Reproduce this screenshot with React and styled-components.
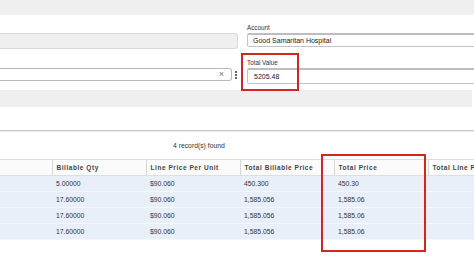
import React from "react";
import styled, { createGlobalStyle } from "styled-components";

const GlobalStyle = createGlobalStyle`
  body {
    margin: 0;
    background: #fff;
    font-family: "Liberation Sans", Arial, sans-serif;
    color: #333;
    overflow: hidden;
  }
`;

const columns = ["", "Billable Qty", "Line Price Per Unit", "Total Billable Price", "Total Price", "Total Line Price"];

const rows = [
  ["", "5.00000", "$90.060", "450.300", "450.30", ""],
  ["", "17.60000", "$90.060", "1,585.056", "1,585.06", ""],
  ["", "17.60000", "$90.060", "1,585.056", "1,585.06", ""],
  ["", "17.60000", "$90.060", "1,585.056", "1,585.06", ""],
];

export default function App() {
  return (
    <Page>
      <GlobalStyle />
      <Band $height={15} />

      <FormRow $height={38}>
        <LeftCol>
          <DisabledBox />
        </LeftCol>
        <RightCol $top={8}>
          <Label>Account</Label>
          <Field $height={14}>Good Samaritan Hospital</Field>
        </RightCol>
      </FormRow>

      <FormRow $height={37}>
        <LeftCol>
          <LookupBox>
            <ClearIcon>×</ClearIcon>
          </LookupBox>
          <Kebab>
            <span />
            <span />
            <span />
          </Kebab>
        </LeftCol>
        <RightCol $top={5}>
          <Label>Total Value</Label>
          <Field $height={16} $indent={6}>5205.48</Field>
          <Highlight style={{ left: 0, top: 0, width: 58, height: 38 }} />
        </RightCol>
      </FormRow>

      <Band $height={17} $trim={2} />

      <Divider />
      <Records>4 record(s) found</Records>

      <TableWrap>
        <Grid>
          <colgroup>
            <col style={{ width: 52 }} />
            {columns.slice(1).map((c) => (
              <col key={c} style={{ width: 94 }} />
            ))}
          </colgroup>
          <thead>
            <tr>
              {columns.map((c, i) => (
                <Th key={i} $first={i === 0}>{c}</Th>
              ))}
            </tr>
          </thead>
          <tbody>
            {rows.map((r, i) => (
              <tr key={i}>
                {r.map((v, j) => (
                  <Td key={j}>{v}</Td>
                ))}
              </tr>
            ))}
          </tbody>
        </Grid>
        <Highlight style={{ left: 321, top: -5, width: 105, height: 98 }} />
      </TableWrap>
    </Page>
  );
}

const Page = styled.div`
  width: 474px;
  height: 265px;
  overflow: hidden;
`;

const Band = styled.div`
  height: ${(p) => p.$height}px;
  margin-right: ${(p) => p.$trim || 0}px;
  background: #efefef;
`;

const FormRow = styled.div`
  display: flex;
  height: ${(p) => p.$height}px;
`;

const LeftCol = styled.div`
  width: 241px;
  flex-shrink: 0;
  display: flex;
  align-items: flex-start;
`;

const RightCol = styled.div`
  position: relative;
  flex: 1;
  padding: ${(p) => p.$top}px 0 0 6px;
  display: flex;
  flex-direction: column;
  gap: 1px;
`;

const DisabledBox = styled.div`
  margin-top: 18px;
  width: 238px;
  height: 16px;
  box-sizing: border-box;
  background: #efefef;
  border: 1px solid #d9d9d9;
  border-left: none;
  border-radius: 0 3px 3px 0;
`;

const LookupBox = styled.div`
  margin-top: 15px;
  width: 232px;
  height: 13px;
  box-sizing: border-box;
  border: 1px solid #b8b8b8;
  border-left: none;
  border-radius: 0 3px 3px 0;
  background: #fff;
  display: flex;
  align-items: center;
  justify-content: flex-end;
  padding-right: 7px;
`;

const ClearIcon = styled.span`
  font-size: 9px;
  line-height: 9px;
  color: #777;
`;

const Kebab = styled.div`
  margin: 18px 0 0 3px;
  display: flex;
  flex-direction: column;
  gap: 1.5px;

  span {
    width: 1.6px;
    height: 1.6px;
    border-radius: 50%;
    background: #444;
  }
`;

const Label = styled.div`
  font-size: 6.3px;
  line-height: 9px;
  color: #333;
`;

const Field = styled.div`
  width: 260px;
  height: ${(p) => p.$height}px;
  box-sizing: border-box;
  border: 1px solid #c4c4c4;
  border-top: 2px solid #bdbdbd;
  border-radius: 2px;
  padding-left: ${(p) => p.$indent || 5}px;
  font-size: 7px;
  display: flex;
  align-items: center;
  color: #222;
  background: #fff;
`;

const Highlight = styled.div`
  position: absolute;
  box-sizing: border-box;
  border: 2.5px solid #d3261f;
  pointer-events: none;
`;

const Divider = styled.div`
  margin-top: 23px;
  height: 1px;
  background: #c9c9c9;
  border-bottom: 1px solid #ececec;
`;

const Records = styled.div`
  padding-left: 173px;
  height: 27px;
  display: flex;
  align-items: center;
  font-size: 6.8px;
  color: #333;
`;

const TableWrap = styled.div`
  position: relative;
`;

const Grid = styled.table`
  table-layout: fixed;
  border-collapse: collapse;
  width: 522px;
`;

const Th = styled.th`
  height: 16px;
  padding: 0 0 0 4px;
  box-sizing: border-box;
  text-align: left;
  font-size: 6.5px;
  font-weight: bold;
  letter-spacing: 0.55px;
  color: #444;
  white-space: nowrap;
  overflow: hidden;
  background: #fbfbfb;
  border-top: 1px solid #dedede;
  border-bottom: 1px solid #dedede;
  border-left: ${(p) => (p.$first ? "none" : "1px solid #d6d6d6")};
`;

const Td = styled.td`
  height: 16px;
  padding: 0 0 0 4px;
  box-sizing: border-box;
  font-size: 6.8px;
  color: #333;
  background: #e9eff9;
  border-bottom: 1px solid #f3f6fc;
  white-space: nowrap;
`;
